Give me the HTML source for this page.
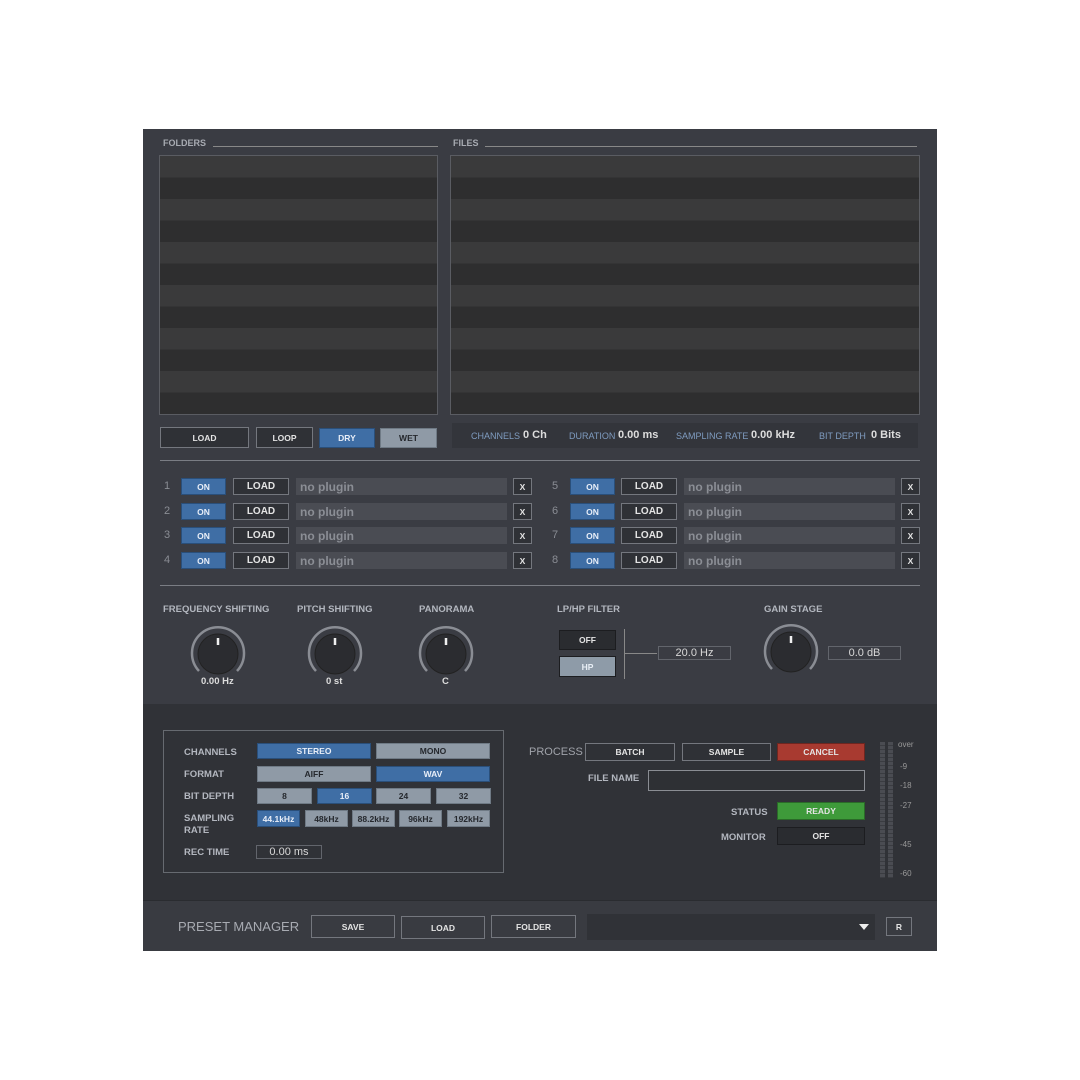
<!DOCTYPE html>
<html><head><meta charset="utf-8"><style>
*{margin:0;padding:0;box-sizing:border-box}
body{width:1080px;height:1080px;background:#fff;position:relative;font-family:"Liberation Sans",sans-serif;overflow:hidden}
.a{position:absolute}
.lbl{position:absolute;color:#b3b7bf;font-size:9.5px;font-weight:bold}
.btn{position:absolute;border:1px solid #74777e;background:#2f3136;color:#e4e4e4;font-size:8.5px;font-weight:bold;display:flex;align-items:center;justify-content:center}
.blue{background:#3f6ea5;border-color:#2a4f7a;color:#e8eef8}
.grey{background:#8f9aa6;border-color:#6f7a85;color:#25282d}
.fld{position:absolute;background:#4a4c53;color:#8b8e95;font-size:12px;font-weight:bold;padding-left:4px;display:flex;align-items:center}
.val{position:absolute;border:1px solid #62656c;color:#d8d8d8;font-size:11px;display:flex;align-items:center;justify-content:center}
.list{position:absolute;border:1px solid #5a5c62;background:repeating-linear-gradient(#3a3a3b 0 21.5px,#2e2e2f 21.5px 43px)}
.sep{position:absolute;height:1px;background:#7a7d84}
.num{position:absolute;color:#8a8d94;font-size:11px}
</style></head><body>
<div class="a" style="left:143px;top:129px;width:794px;height:575px;background:#3a3c43"></div>
<div class="a" style="left:143px;top:704px;width:794px;height:196px;background:#303237"></div>
<div class="a" style="left:143px;top:900px;width:794px;height:51px;background:#393b41;border-top:1px solid #2a2c30"></div>

<div class="lbl" style="left:163px;top:138px;font-size:9px;color:#a8abb2">FOLDERS</div>
<div class="sep" style="left:213px;top:146px;width:225px;background:#888"></div>
<div class="lbl" style="left:453px;top:138px;font-size:9px;color:#a8abb2">FILES</div>
<div class="sep" style="left:485px;top:146px;width:432px;background:#888"></div>
<div class="list" style="left:159px;top:155px;width:279px;height:260px"></div>
<div class="list" style="left:450px;top:155px;width:470px;height:260px"></div>

<div class="btn" style="left:160px;top:427px;width:89px;height:21px">LOAD</div>
<div class="btn" style="left:256px;top:427px;width:57px;height:21px">LOOP</div>
<div class="btn blue" style="left:319px;top:428px;width:56px;height:20px">DRY</div>
<div class="btn grey" style="left:380px;top:428px;width:57px;height:20px">WET</div>
<div class="a" style="left:452px;top:423px;width:466px;height:25px;background:#33353b"></div>
<div class="a" style="left:471px;top:431px;font-size:9px;color:#7f9cc0">CHANNELS</div>
<div class="a" style="left:523px;top:429px;font-size:11px;color:#ddd;font-weight:bold">0 Ch</div>
<div class="a" style="left:569px;top:431px;font-size:9px;color:#7f9cc0">DURATION</div>
<div class="a" style="left:618px;top:429px;font-size:11px;color:#ddd;font-weight:bold">0.00 ms</div>
<div class="a" style="left:676px;top:431px;font-size:9px;color:#7f9cc0">SAMPLING RATE</div>
<div class="a" style="left:751px;top:429px;font-size:11px;color:#ddd;font-weight:bold">0.00 kHz</div>
<div class="a" style="left:819px;top:431px;font-size:9px;color:#7f9cc0">BIT DEPTH</div>
<div class="a" style="left:871px;top:429px;font-size:11px;color:#ddd;font-weight:bold">0 Bits</div>

<div class="sep" style="left:160px;top:460px;width:760px"></div>
<div class="sep" style="left:160px;top:585px;width:760px"></div>

<div class="num" style="left:164px;top:480px">1</div><div class="btn blue" style="left:181px;top:478px;width:45px;height:17px">ON</div><div class="btn" style="left:233px;top:478px;width:56px;height:17px;font-size:10px">LOAD</div><div class="fld" style="left:296px;top:478px;width:211px;height:17px">no plugin</div><div class="btn" style="left:513px;top:478px;width:19px;height:17px">X</div>
<div class="num" style="left:164px;top:505px">2</div><div class="btn blue" style="left:181px;top:503px;width:45px;height:17px">ON</div><div class="btn" style="left:233px;top:503px;width:56px;height:17px;font-size:10px">LOAD</div><div class="fld" style="left:296px;top:503px;width:211px;height:17px">no plugin</div><div class="btn" style="left:513px;top:503px;width:19px;height:17px">X</div>
<div class="num" style="left:164px;top:529px">3</div><div class="btn blue" style="left:181px;top:527px;width:45px;height:17px">ON</div><div class="btn" style="left:233px;top:527px;width:56px;height:17px;font-size:10px">LOAD</div><div class="fld" style="left:296px;top:527px;width:211px;height:17px">no plugin</div><div class="btn" style="left:513px;top:527px;width:19px;height:17px">X</div>
<div class="num" style="left:164px;top:554px">4</div><div class="btn blue" style="left:181px;top:552px;width:45px;height:17px">ON</div><div class="btn" style="left:233px;top:552px;width:56px;height:17px;font-size:10px">LOAD</div><div class="fld" style="left:296px;top:552px;width:211px;height:17px">no plugin</div><div class="btn" style="left:513px;top:552px;width:19px;height:17px">X</div>
<div class="num" style="left:552px;top:480px">5</div><div class="btn blue" style="left:570px;top:478px;width:45px;height:17px">ON</div><div class="btn" style="left:621px;top:478px;width:56px;height:17px;font-size:10px">LOAD</div><div class="fld" style="left:684px;top:478px;width:211px;height:17px">no plugin</div><div class="btn" style="left:901px;top:478px;width:19px;height:17px">X</div>
<div class="num" style="left:552px;top:505px">6</div><div class="btn blue" style="left:570px;top:503px;width:45px;height:17px">ON</div><div class="btn" style="left:621px;top:503px;width:56px;height:17px;font-size:10px">LOAD</div><div class="fld" style="left:684px;top:503px;width:211px;height:17px">no plugin</div><div class="btn" style="left:901px;top:503px;width:19px;height:17px">X</div>
<div class="num" style="left:552px;top:529px">7</div><div class="btn blue" style="left:570px;top:527px;width:45px;height:17px">ON</div><div class="btn" style="left:621px;top:527px;width:56px;height:17px;font-size:10px">LOAD</div><div class="fld" style="left:684px;top:527px;width:211px;height:17px">no plugin</div><div class="btn" style="left:901px;top:527px;width:19px;height:17px">X</div>
<div class="num" style="left:552px;top:554px">8</div><div class="btn blue" style="left:570px;top:552px;width:45px;height:17px">ON</div><div class="btn" style="left:621px;top:552px;width:56px;height:17px;font-size:10px">LOAD</div><div class="fld" style="left:684px;top:552px;width:211px;height:17px">no plugin</div><div class="btn" style="left:901px;top:552px;width:19px;height:17px">X</div>

<div class="lbl" style="left:163px;top:604px">FREQUENCY SHIFTING</div>
<div class="lbl" style="left:297px;top:604px">PITCH SHIFTING</div>
<div class="lbl" style="left:419px;top:604px">PANORAMA</div>
<div class="lbl" style="left:557px;top:604px">LP/HP FILTER</div>
<div class="lbl" style="left:764px;top:604px">GAIN STAGE</div>
<svg class="a" style="left:0;top:0" width="1080" height="1080">
<g fill="none" stroke="#8a8d94" stroke-width="2.5">
<path d="M199 671 A26 26 0 1 1 237 671"/>
<path d="M316 671 A26 26 0 1 1 354 671"/>
<path d="M427 671 A26 26 0 1 1 465 671"/>
<path d="M772 669 A26 26 0 1 1 810 669"/>
</g>
<g fill="#2b2c30" stroke="#222" stroke-width="1">
<circle cx="218" cy="654" r="20"/><circle cx="335" cy="654" r="20"/><circle cx="446" cy="654" r="20"/><circle cx="791" cy="652" r="20"/>
</g>
<g stroke="#f0f0f0" stroke-width="2.5">
<line x1="218" y1="638" x2="218" y2="645"/><line x1="335" y1="638" x2="335" y2="645"/><line x1="446" y1="638" x2="446" y2="645"/><line x1="791" y1="636" x2="791" y2="643"/>
</g>
<g stroke="#888" stroke-width="1"><line x1="624.5" y1="629" x2="624.5" y2="679"/><line x1="624" y1="653.5" x2="657" y2="653.5"/></g>
</svg>
<div class="a" style="left:201px;top:676px;font-size:9.5px;color:#ddd;font-weight:bold">0.00 Hz</div>
<div class="a" style="left:326px;top:676px;font-size:9.5px;color:#ddd;font-weight:bold">0 st</div>
<div class="a" style="left:442px;top:676px;font-size:9.5px;color:#ddd;font-weight:bold">C</div>
<div class="btn" style="left:559px;top:630px;width:57px;height:20px;background:#2a2c30;border-color:#1c1d20">OFF</div>
<div class="btn grey" style="left:559px;top:656px;width:57px;height:21px;border-color:#1c1d20;color:#e8eef5;background:#8e9ba8">HP</div>
<div class="val" style="left:658px;top:646px;width:73px;height:14px">20.0 Hz</div>
<div class="val" style="left:828px;top:646px;width:73px;height:14px">0.0 dB</div>

<div class="a" style="left:163px;top:730px;width:341px;height:143px;border:1px solid #666a70"></div>
<div class="lbl" style="left:184px;top:747px">CHANNELS</div>
<div class="lbl" style="left:184px;top:769px">FORMAT</div>
<div class="lbl" style="left:184px;top:791px">BIT DEPTH</div>
<div class="lbl" style="left:184px;top:813px;line-height:12px">SAMPLING<br>RATE</div>
<div class="lbl" style="left:184px;top:847px">REC TIME</div>
<div class="btn blue" style="left:257px;top:743px;width:114px;height:16px">STEREO</div>
<div class="btn grey" style="left:376px;top:743px;width:114px;height:16px">MONO</div>
<div class="btn grey" style="left:257px;top:766px;width:114px;height:16px">AIFF</div>
<div class="btn blue" style="left:376px;top:766px;width:114px;height:16px">WAV</div>
<div class="btn grey" style="left:257px;top:788px;width:55px;height:16px">8</div>
<div class="btn blue" style="left:317px;top:788px;width:55px;height:16px">16</div>
<div class="btn grey" style="left:376px;top:788px;width:55px;height:16px">24</div>
<div class="btn grey" style="left:436px;top:788px;width:55px;height:16px">32</div>
<div class="btn blue" style="left:257px;top:810px;width:43px;height:17px">44.1kHz</div>
<div class="btn grey" style="left:305px;top:810px;width:43px;height:17px">48kHz</div>
<div class="btn grey" style="left:352px;top:810px;width:43px;height:17px">88.2kHz</div>
<div class="btn grey" style="left:399px;top:810px;width:43px;height:17px">96kHz</div>
<div class="btn grey" style="left:447px;top:810px;width:43px;height:17px">192kHz</div>
<div class="val" style="left:256px;top:845px;width:66px;height:14px">0.00 ms</div>

<div class="a" style="left:529px;top:746px;font-size:11px;color:#a0a3aa">PROCESS</div>
<div class="btn" style="left:585px;top:743px;width:90px;height:18px">BATCH</div>
<div class="btn" style="left:682px;top:743px;width:89px;height:18px">SAMPLE</div>
<div class="btn" style="left:777px;top:743px;width:88px;height:18px;background:#a83a30;border-color:#6e2620">CANCEL</div>
<div class="lbl" style="left:588px;top:773px">FILE NAME</div>
<div class="a" style="left:648px;top:770px;width:217px;height:21px;border:1px solid #8a8d93;background:#2e3034"></div>
<div class="lbl" style="left:731px;top:807px">STATUS</div>
<div class="btn" style="left:777px;top:802px;width:88px;height:18px;background:#3e9a3a;border-color:#2a6a28">READY</div>
<div class="lbl" style="left:721px;top:832px">MONITOR</div>
<div class="btn" style="left:777px;top:827px;width:88px;height:18px;background:#2a2c30;border-color:#1c1d20">OFF</div>

<div class="a" style="left:880px;top:742px;width:5px;height:136px;background:repeating-linear-gradient(#4a4c52 0 3px,#3a3c41 3px 4px)"></div>
<div class="a" style="left:888px;top:742px;width:5px;height:136px;background:repeating-linear-gradient(#4a4c52 0 3px,#3a3c41 3px 4px)"></div>
<div class="a" style="left:898px;top:740px;font-size:8px;color:#999;line-height:10px">over</div>
<div class="a" style="left:900px;top:762px;font-size:8px;color:#999">-9</div>
<div class="a" style="left:900px;top:781px;font-size:8px;color:#999">-18</div>
<div class="a" style="left:900px;top:801px;font-size:8px;color:#999">-27</div>
<div class="a" style="left:900px;top:840px;font-size:8px;color:#999">-45</div>
<div class="a" style="left:900px;top:869px;font-size:8px;color:#999">-60</div>

<div class="a" style="left:178px;top:919px;font-size:13px;color:#a8abb2">PRESET MANAGER</div>
<div class="btn" style="left:311px;top:915px;width:84px;height:23px;background:#393b41">SAVE</div>
<div class="btn" style="left:401px;top:916px;width:84px;height:23px;background:#393b41">LOAD</div>
<div class="btn" style="left:491px;top:915px;width:85px;height:23px;background:#393b41">FOLDER</div>
<div class="a" style="left:587px;top:914px;width:288px;height:26px;background:#303237"></div>
<div class="a" style="left:859px;top:924px;width:0;height:0;border-left:5px solid transparent;border-right:5px solid transparent;border-top:6px solid #eee"></div>
<div class="btn" style="left:886px;top:917px;width:26px;height:19px;background:#393b41">R</div>
</body></html>
